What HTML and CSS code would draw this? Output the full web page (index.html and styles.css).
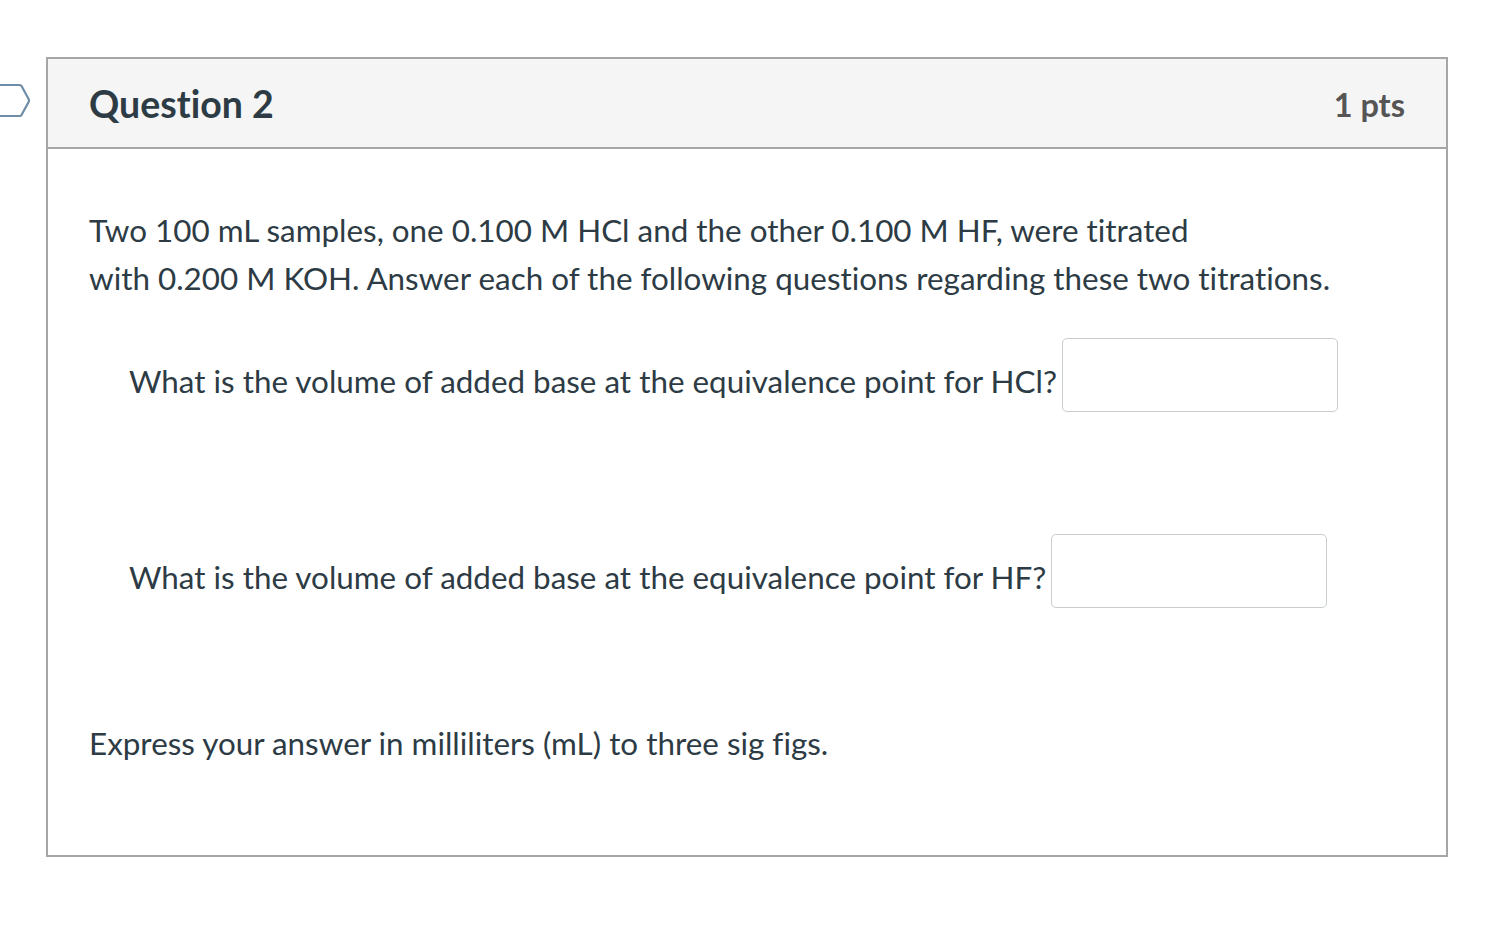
FILE: index.html
```html
<!DOCTYPE html>
<html lang="en">
<head>
<meta charset="utf-8">
<title>Question 2</title>
<link rel="stylesheet" href="styles.css">
</head>
<body>
<div class="page">
  <svg class="flag" width="32" height="38" viewBox="0 0 32 38" aria-hidden="true">
    <path d="M-4 2 H19.5 Q21 2 21.8 3.4 L28.6 16 Q29.4 17.5 28.6 19 L21.8 31.6 Q21 33 19.5 33 H-4" fill="none" stroke="#6f8da6" stroke-width="2.2" stroke-linejoin="round"/>
  </svg>
  <div class="question">
    <div class="question-header">
      <h2 class="question-title">Question 2</h2>
      <span class="question-points">1 pts</span>
    </div>
    <div class="question-body">
      <p class="question-text">Two 100 mL samples, one 0.100 M HCl and the other 0.100 M HF, were titrated<br>with 0.200 M KOH. Answer each of the following questions regarding these two titrations.</p>
      <div class="answer-row first">
        <span class="answer-label">What is the volume of added base at the equivalence point for HCl?</span>
        <input class="answer-input" type="text" aria-label="Answer for HCl">
      </div>
      <div class="answer-row second">
        <span class="answer-label">What is the volume of added base at the equivalence point for HF?</span>
        <input class="answer-input" type="text" aria-label="Answer for HF">
      </div>
      <p class="question-note">Express your answer in milliliters (mL) to three sig figs.</p>
    </div>
  </div>
</div>
</body>
</html>
```

FILE: styles.css
```css
html, body {
  margin: 0;
  padding: 0;
  background: #ffffff;
}

body {
  font-family: Lato, "Open Sans", "Liberation Sans", sans-serif;
  color: #2d3b45;
  font-variant-ligatures: none;
}

.page {
  position: relative;
  padding: 57px 0 0 46px;
}

.flag {
  position: absolute;
  left: 0;
  top: 83px;
}

.question {
  width: 1402px;
  box-sizing: border-box;
  border: 2px solid #a6a6a6;
}

.question-header {
  display: flex;
  align-items: center;
  justify-content: space-between;
  height: 88px;
  padding: 0 41px 0 41px;
  background: #f5f5f5;
  border-bottom: 2px solid #a6a6a6;
}

.question-title {
  margin: 0;
  font-size: 37.5px;
  font-weight: 700;
  line-height: 1.2;
  color: #2d3b45;
}

.question-points {
  font-size: 32.5px;
  font-weight: 700;
  color: #555555;
  padding-top: 2px;
}

.question-body {
  padding: 57px 40px 88px 41px;
  font-size: 31.4px;
  line-height: 48px;
}

.question-text {
  margin: 0;
}

.answer-row {
  display: flex;
  align-items: center;
  gap: 5px;
  margin-left: 40px;
}

.answer-row.first {
  margin-top: 36px;
}

.answer-row.second {
  margin-top: 122px;
}

.answer-label {
  padding-top: 11px;
}

.answer-input {
  width: 276px;
  height: 74px;
  box-sizing: border-box;
  border: 1px solid #c7cdd1;
  border-radius: 5px;
  background: #ffffff;
  font: inherit;
  padding: 0 10px;
  margin: 0;
}

.question-note {
  margin: 111px 0 0 0;
}
```
